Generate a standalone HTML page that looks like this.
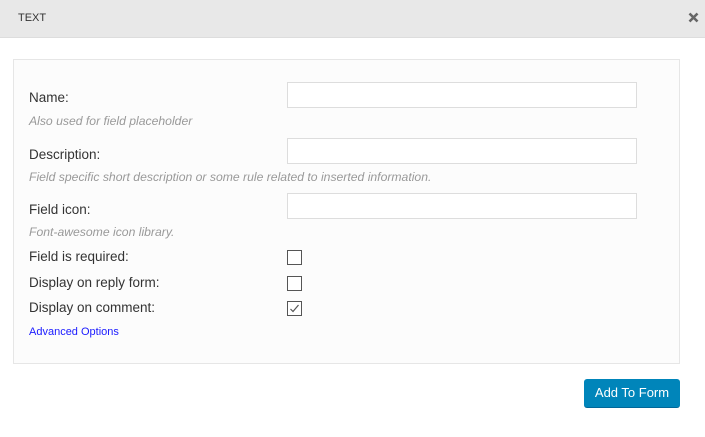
<!DOCTYPE html>
<html><head><style>
body{margin:0;width:705px;height:437px;background:#fff;font-family:"Liberation Sans",sans-serif;position:relative;overflow:hidden}
.hd{position:absolute;left:0;top:0;width:705px;height:37px;background:#e8e8e8;border-bottom:1px solid #ddd}
.t{position:absolute;font-size:13.5px;color:#333}
.hint{position:absolute;font-size:12.2px;color:#999;font-style:italic}
.panel{position:absolute;left:13px;top:59px;width:665px;height:303px;background:#fcfcfc;border:1px solid #e6e6e6}
.in{position:absolute;left:287px;width:348px;height:24px;background:#fff;border:1px solid #ddd}
.cb{position:absolute;left:287px;width:13px;height:13px;border:1px solid #555;background:#fff}
</style></head><body>
<div class="hd"></div>
<div class="t" style="left:18px;top:12px;font-size:11px;color:#333">TEXT</div>
<svg style="position:absolute;left:688px;top:12px" width="11" height="11"><path d="M1.5 1.5 L9.5 9.5 M9.5 1.5 L1.5 9.5" stroke="#666" stroke-width="2.6"/></svg>
<div class="panel"></div>
<div class="t" style="left:29px;top:90px">Name:</div>
<div class="hint" style="left:29px;top:114px">Also used for field placeholder</div>
<div class="in" style="top:82px"></div>
<div class="t" style="left:29px;top:147px">Description:</div>
<div class="hint" style="left:29px;top:170px">Field specific short description or some rule related to inserted information.</div>
<div class="in" style="top:138px"></div>
<div class="t" style="left:29px;top:202px">Field icon:</div>
<div class="hint" style="left:29px;top:225px">Font-awesome icon library.</div>
<div class="in" style="top:193px"></div>
<div class="t" style="left:29px;top:249px">Field is required:</div>
<div class="cb" style="top:250px"></div>
<div class="t" style="left:29px;top:275px">Display on reply form:</div>
<div class="cb" style="top:276px"></div>
<div class="t" style="left:29px;top:300px">Display on comment:</div>
<div class="cb" style="top:301px"><svg width="13" height="13" style="position:absolute;left:0;top:0"><path d="M2.5 7 L5 9.5 L10.5 3" stroke="#555" stroke-width="1.2" fill="none"/></svg></div>
<div class="t" style="left:29px;top:326px;font-size:11px;color:#1a1aff">Advanced Options</div>
<div style="position:absolute;left:584px;top:379px;width:96px;height:29px;background:#0085ba;border-radius:3px;border-bottom:1px solid #006799;box-sizing:border-box;color:#fff;font-size:13px;text-align:center;line-height:28px">Add To Form</div>
</body></html>
